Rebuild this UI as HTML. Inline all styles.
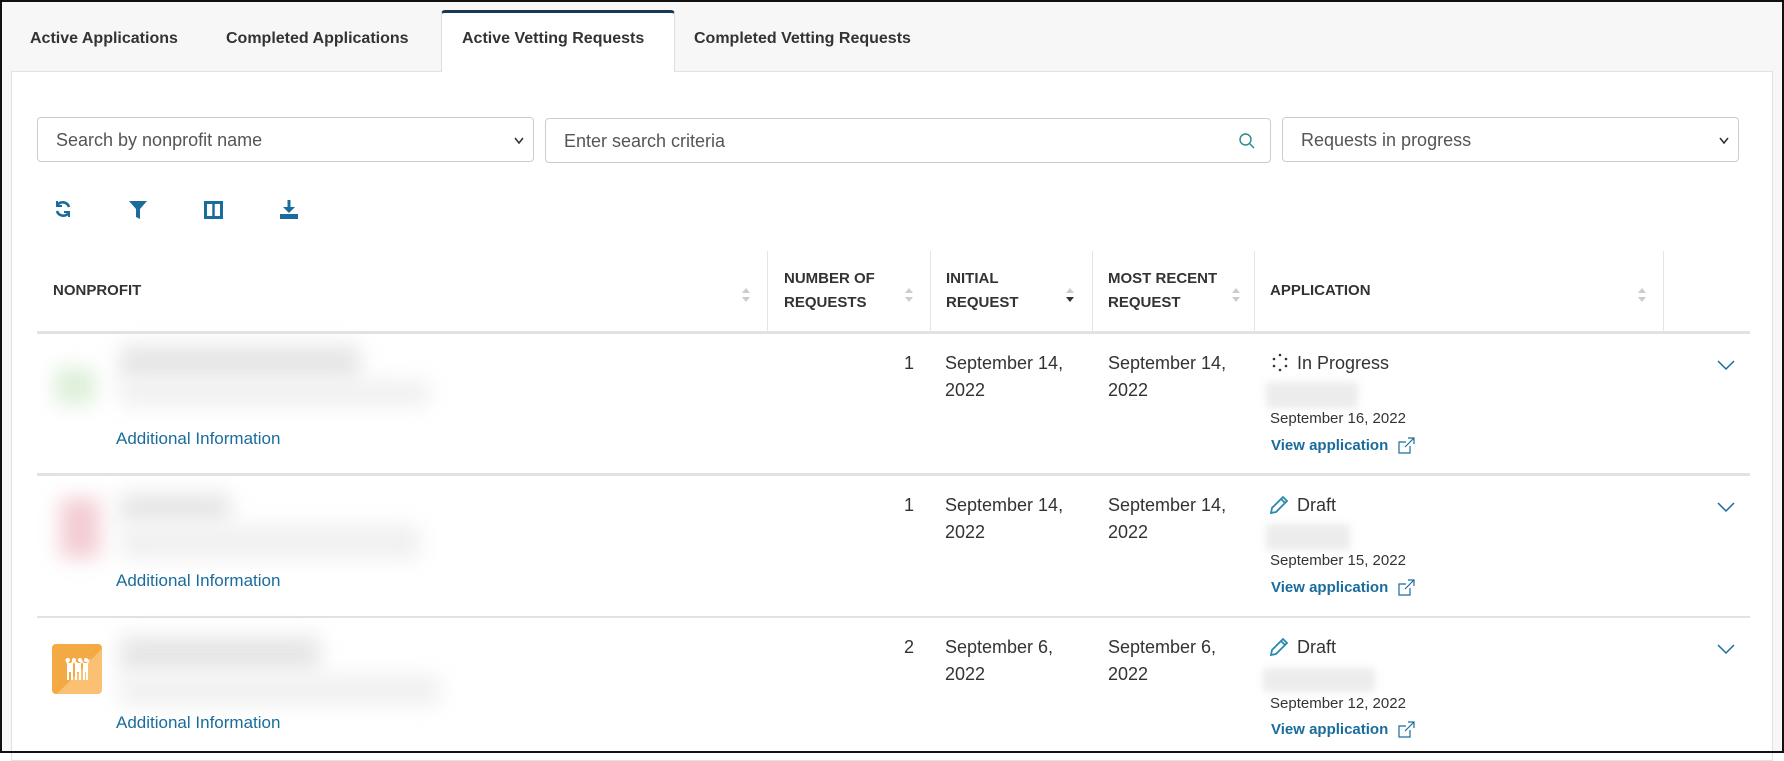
<!DOCTYPE html>
<html><head><meta charset="utf-8"><style>
*{box-sizing:border-box;margin:0;padding:0}
body{width:1784px;height:753px;overflow:hidden;font-family:"Liberation Sans",sans-serif;background:#fff;position:relative;color:#333}
.frame{position:absolute;left:0;top:0;width:1784px;height:753px;border:2px solid #111;background:#f7f7f7}
.a{position:absolute}
.tab{position:absolute;top:30px;font-size:16px;font-weight:bold;color:#333}
.panel{position:absolute;left:11px;top:71px;width:1762px;height:690px;background:#fff;border:1px solid #e2e2e2}
.inp{position:absolute;top:117px;height:45px;border:1px solid #ccc;border-radius:4px;background:#fff;font-size:18px;color:#555;padding:12px 0 0 18px}
.th{position:absolute;font-size:15px;font-weight:bold;color:#333;line-height:24px}
.vl{position:absolute;top:251px;height:81px;width:1px;background:#e4e4e4}
.sort{position:absolute;width:8px;height:16px}
.hl{position:absolute;left:37px;height:2px;background:#dfe3e6}
.t18{position:absolute;font-size:18px;color:#333;line-height:27px}
.small{position:absolute;font-size:15px;color:#333}
.va{position:absolute;font-size:15px;font-weight:bold;color:#1a6c9c}
.ai{position:absolute;left:116px;font-size:17px;color:#1a6c9c}
.blur{position:absolute;background:#e9e9e9;filter:blur(10px)}
</style></head><body>
<div class="frame"></div>
<div class="a" style="left:441px;top:10px;width:234px;height:62px;background:#fff;border:1px solid #ddd;border-top:3px solid #163a56;border-bottom:none;border-radius:4px 4px 0 0;z-index:2"></div>
<div class="panel"></div>
<div class="tab" style="left:30px;z-index:3">Active Applications</div>
<div class="tab" style="left:226px;z-index:3">Completed Applications</div>
<div class="tab" style="left:462px;z-index:3">Active Vetting Requests</div>
<div class="tab" style="left:694px;z-index:3">Completed Vetting Requests</div>

<div class="inp" style="left:37px;width:497px">Search by nonprofit name<svg class="a" style="right:8px;top:18px" width="12" height="10" viewBox="0 0 12 10"><path d="M2 2l4 5 4-5" fill="none" stroke="#333" stroke-width="1.6"/></svg></div>
<div class="inp" style="left:545px;width:726px;top:118px">Enter search criteria
<svg class="a" style="right:14px;top:13px" width="18" height="18" viewBox="0 0 18 18"><circle cx="7.5" cy="7.5" r="5.5" fill="none" stroke="#2a8a8a" stroke-width="1.4"/><path d="M11.5 11.5 16 16" stroke="#2a8a8a" stroke-width="1.4"/></svg></div>
<div class="inp" style="left:1282px;width:457px">Requests in progress<svg class="a" style="right:8px;top:18px" width="12" height="10" viewBox="0 0 12 10"><path d="M2 2l4 5 4-5" fill="none" stroke="#333" stroke-width="1.6"/></svg></div>

<svg class="a" style="left:53px;top:199px" width="20" height="20" viewBox="0 0 20 20" fill="none" stroke="#1a6c9c" stroke-width="2.6"><path d="M16 8A6.5 6.5 0 0 0 4.5 6"/><path d="M4 12a6.5 6.5 0 0 0 11.5 2"/><path d="M4 2v5h5" stroke-width="2"/><path d="M16 18v-5h-5" stroke-width="2"/></svg>
<svg class="a" style="left:128px;top:200px" width="20" height="20" viewBox="0 0 20 20"><path d="M1 1h18l-7 8v10l-4-2V9z" fill="#1a6c9c"/></svg>
<svg class="a" style="left:204px;top:201px" width="19" height="18" viewBox="0 0 19 18"><rect x="1.5" y="1.5" width="16" height="15" fill="none" stroke="#1a6c9c" stroke-width="3"/><path d="M9.5 2v14" stroke="#1a6c9c" stroke-width="2.5"/></svg>
<svg class="a" style="left:279px;top:199px" width="20" height="21" viewBox="0 0 20 21"><path d="M10 1v11" stroke="#1a6c9c" stroke-width="3"/><path d="M4 8l6 6 6-6z" fill="#1a6c9c"/><rect x="1" y="15" width="18" height="5" fill="#1a6c9c"/></svg>

<div class="th" style="left:53px;top:279px">NONPROFIT</div>
<div class="th" style="left:784px;top:267px">NUMBER OF<br>REQUESTS</div>
<div class="th" style="left:946px;top:267px">INITIAL<br>REQUEST</div>
<div class="th" style="left:1108px;top:267px">MOST RECENT<br>REQUEST</div>
<div class="th" style="left:1270px;top:279px">APPLICATION</div>
<div class="vl" style="left:767px"></div><div class="vl" style="left:930px"></div><div class="vl" style="left:1092px"></div><div class="vl" style="left:1254px"></div><div class="vl" style="left:1663px"></div>
<svg class="sort" style="left:742px;top:287px" viewBox="0 0 8 16"><path d="M0 6l4-5 4 5zM0 10l4 5 4-5z" fill="#ccc"/></svg>
<svg class="sort" style="left:905px;top:287px" viewBox="0 0 8 16"><path d="M0 6l4-5 4 5zM0 10l4 5 4-5z" fill="#ccc"/></svg>
<svg class="sort" style="left:1066px;top:287px" viewBox="0 0 8 16"><path d="M0 6l4-5 4 5z" fill="#ccc"/><path d="M0 10l4 5 4-5z" fill="#333"/></svg>
<svg class="sort" style="left:1232px;top:287px" viewBox="0 0 8 16"><path d="M0 6l4-5 4 5zM0 10l4 5 4-5z" fill="#ccc"/></svg>
<svg class="sort" style="left:1638px;top:287px" viewBox="0 0 8 16"><path d="M0 6l4-5 4 5zM0 10l4 5 4-5z" fill="#ccc"/></svg>
<div class="hl" style="top:331px;width:1713px;height:3px"></div>
<div class="hl" style="top:473px;width:1713px;height:3px"></div>
<div class="hl" style="top:616px;width:1713px"></div>

<div class="blur" style="left:55px;top:368px;width:40px;height:36px;background:#dcefd8"></div>
<div class="blur" style="left:120px;top:345px;width:240px;height:36px;background:#e6e6e6"></div>
<div class="blur" style="left:120px;top:380px;width:310px;height:26px;background:#f0f0f0"></div>
<div class="blur" style="left:60px;top:498px;width:40px;height:60px;background:#f3cdd3"></div>
<div class="blur" style="left:120px;top:493px;width:110px;height:30px;background:#e6e6e6"></div>
<div class="blur" style="left:120px;top:525px;width:300px;height:34px;background:#f0f0f0"></div>
<div class="a" style="left:52px;top:644px;width:50px;height:50px;border-radius:4px;background:linear-gradient(135deg,#f3a944 55%,#fbc072 55%)">
<svg class="a" style="left:12px;top:13px" width="26" height="24" viewBox="0 0 26 24" fill="#fff"><circle cx="4" cy="3" r="2"/><circle cx="10" cy="3" r="2"/><circle cx="16" cy="3" r="2"/><circle cx="22" cy="3" r="2"/><path d="M1 2l2 5v16h2v-8h2v8h2V7l1-2 1 2v16h2v-8h2v8h2V7l1-2 1 2v16h2v-8h1v8h2V7l2-5-2 1-1 3h-3l-2-3-2 3h-2L9 3 7 6H5L3 3z"/></svg></div>
<div class="blur" style="left:120px;top:636px;width:200px;height:36px;background:#e6e6e6"></div>
<div class="blur" style="left:120px;top:675px;width:320px;height:30px;background:#f0f0f0"></div>

<div class="ai" style="top:429px">Additional Information</div>
<div class="ai" style="top:571px">Additional Information</div>
<div class="ai" style="top:713px">Additional Information</div>

<div class="t18" style="left:904px;top:350px">1</div>
<div class="t18" style="left:904px;top:492px">1</div>
<div class="t18" style="left:904px;top:634px">2</div>
<div class="t18" style="left:945px;top:350px">September 14,<br>2022</div>
<div class="t18" style="left:1108px;top:350px">September 14,<br>2022</div>
<div class="t18" style="left:945px;top:492px">September 14,<br>2022</div>
<div class="t18" style="left:1108px;top:492px">September 14,<br>2022</div>
<div class="t18" style="left:945px;top:634px">September 6,<br>2022</div>
<div class="t18" style="left:1108px;top:634px">September 6,<br>2022</div>

<svg class="a" style="left:1270px;top:353px" width="20" height="20" viewBox="0 0 20 20" fill="#333"><circle cx="10" cy="2" r="1.3"/><circle cx="16" cy="6" r="1.3"/><circle cx="16" cy="13" r="1.3"/><circle cx="10" cy="17" r="1.3"/><circle cx="4" cy="13" r="1.3"/><circle cx="4" cy="6" r="1.3"/></svg>
<div class="t18" style="left:1297px;top:350px">In Progress</div>
<svg class="a" style="left:1268px;top:494px" width="22" height="22" viewBox="0 0 22 22" fill="none" stroke="#2a8ab0" stroke-width="1.8"><path d="M3 19l1-5L15 3l4 4L8 18z"/><path d="M13 5l4 4"/></svg>
<div class="t18" style="left:1297px;top:492px">Draft</div>
<svg class="a" style="left:1268px;top:636px" width="22" height="22" viewBox="0 0 22 22" fill="none" stroke="#2a8ab0" stroke-width="1.8"><path d="M3 19l1-5L15 3l4 4L8 18z"/><path d="M13 5l4 4"/></svg>
<div class="t18" style="left:1297px;top:634px">Draft</div>

<div class="blur" style="left:1266px;top:382px;width:92px;height:26px;filter:blur(4px);background:#ececec"></div>
<div class="blur" style="left:1266px;top:524px;width:84px;height:26px;filter:blur(4px);background:#ececec"></div>
<div class="blur" style="left:1263px;top:668px;width:112px;height:24px;filter:blur(4px);background:#ececec"></div>

<div class="small" style="left:1270px;top:410px">September 16, 2022</div>
<div class="small" style="left:1270px;top:552px">September 15, 2022</div>
<div class="small" style="left:1270px;top:695px">September 12, 2022</div>
<div class="va" style="left:1271px;top:437px">View application</div>
<div class="va" style="left:1271px;top:579px">View application</div>
<div class="va" style="left:1271px;top:721px">View application</div>
<svg class="a" style="left:1398px;top:437px" width="17" height="17" viewBox="0 0 17 17" fill="none" stroke="#1a6c9c" stroke-width="1.2"><path d="M12 9v7H1V5h7M10 1h6v6M16 1L7 10"/></svg>
<svg class="a" style="left:1398px;top:579px" width="17" height="17" viewBox="0 0 17 17" fill="none" stroke="#1a6c9c" stroke-width="1.2"><path d="M12 9v7H1V5h7M10 1h6v6M16 1L7 10"/></svg>
<svg class="a" style="left:1398px;top:721px" width="17" height="17" viewBox="0 0 17 17" fill="none" stroke="#1a6c9c" stroke-width="1.2"><path d="M12 9v7H1V5h7M10 1h6v6M16 1L7 10"/></svg>

<svg class="a" style="left:1716px;top:359px" width="20" height="12" viewBox="0 0 20 12" fill="none" stroke="#1a6c9c" stroke-width="1.5"><path d="M2 2l8 8 8-8"/></svg>
<svg class="a" style="left:1716px;top:501px" width="20" height="12" viewBox="0 0 20 12" fill="none" stroke="#1a6c9c" stroke-width="1.5"><path d="M2 2l8 8 8-8"/></svg>
<svg class="a" style="left:1716px;top:643px" width="20" height="12" viewBox="0 0 20 12" fill="none" stroke="#1a6c9c" stroke-width="1.5"><path d="M2 2l8 8 8-8"/></svg>
<div class="a" style="left:0;top:0;width:1784px;height:753px;border:2px solid #111;pointer-events:none"></div>
</body></html>
